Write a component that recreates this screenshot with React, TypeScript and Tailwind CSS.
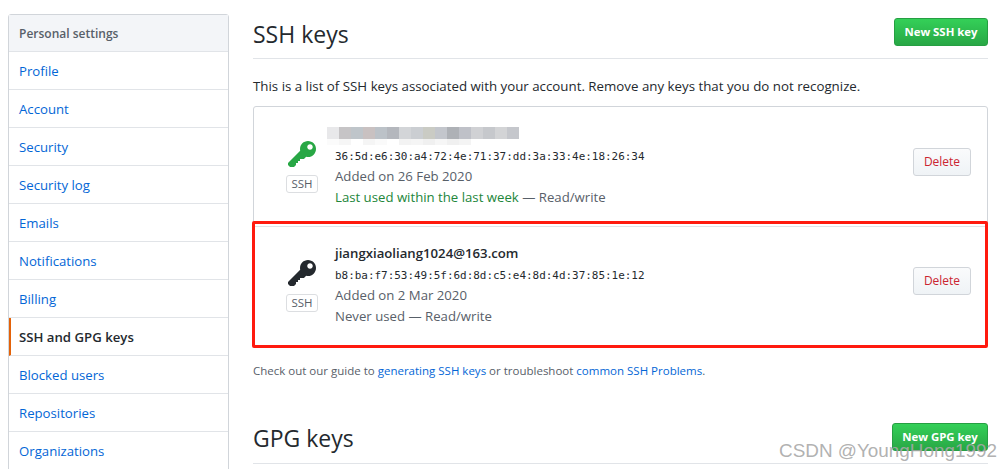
import React from "react";

const menuItems = [
  "Profile",
  "Account",
  "Security",
  "Security log",
  "Emails",
  "Notifications",
  "Billing",
  "SSH and GPG keys",
  "Blocked users",
  "Repositories",
  "Organizations",
];

const mosaicTop = ["#e8e8ea", "#c6c4c6", "#bfc5ca", "#c9c1c1", "#bcc2c8", "#b4b7bd", "#d3d5d8", "#cbced2", "#cacbc4", "#c3c6cc", "#aeb1b6", "#bfc1c8", "#d0d1d4", "#c6c8cc", "#d3d4d6", "#c5c7cc"];
const mosaicBottom = ["#fbfbfb", "#f6f6f6", "#ffffff", "#f5f5f5", "#fafafa", "#ffffff", "#f3f3f3", "#f5f5f5", "#f0f0f0", "#f6f6f6", "#f0f0f0", "#f4f4f4"];

const KeyIcon = ({ className }: { className: string }) => (
  <svg viewBox="0 0 14 16" width="28" height="32" className={className} fill="currentColor">
    <path
      fillRule="evenodd"
      d="M12.83 2.17C12.08 1.42 11.14 1.03 10 1c-1.13.03-2.08.42-2.83 1.17S6.04 3.86 6.01 5c0 .3.03.59.09.89L0 12v1l1 1h2l1-1v-1h1v-1h1v-1h2l1.09-1.11c.3.08.59.11.91.11 1.14-.03 2.08-.42 2.83-1.17S13.97 6.14 14 5c-.03-1.14-.42-2.08-1.17-2.83zM11 5.38c-.77 0-1.38-.61-1.38-1.38 0-.77.61-1.38 1.38-1.38.77 0 1.38.61 1.38 1.38 0 .77-.61 1.38-1.38 1.38z"
    />
  </svg>
);

const SshKey = ({
  title,
  fingerprint,
  added,
  used,
  iconColor,
  border,
}: {
  title: string;
  fingerprint: string;
  added: string;
  used: React.ReactNode;
  iconColor: string;
  border?: boolean;
}) => (
  <div className={`flex h-[119px] items-start pl-[24px] pr-4 ${border ? "border-t border-[#e1e4e8] pt-[17px]" : "pt-[18px]"}`}>
    <div className="mt-[14px] flex w-[48px] shrink-0 flex-col items-center">
      <KeyIcon className={iconColor} />
      <span className="mt-[4px] h-[18px] w-[32px] rounded-[3px] border border-[#dcdee1] text-center text-[11.5px] leading-[16px] text-[#586069]">SSH</span>
    </div>
    <div className="ml-[9px] flex-1">
      <div className="h-[19px] text-[13.2px] font-semibold leading-[19px] text-[#24292e]">{title}</div>
      <div className="mt-[5px] font-['DejaVu_Sans_Mono',monospace] text-[10.95px] leading-[16px] text-[#24292e]">{fingerprint}</div>
      <div className="mt-[1px] text-[13.2px] leading-[21px] text-[#586069]">{added}</div>
      <div className="text-[13.2px] leading-[21px] text-[#586069]">{used}</div>
    </div>
    <button className="mt-[23px] h-[28px] w-[58px] rounded-[3px] border border-[#d1d5da] bg-gradient-to-b from-[#fafbfc] to-[#eff3f6] text-[12px] font-medium text-[#cb2431]">
      Delete
    </button>
  </div>
);

const GreenButton = ({ label, width }: { label: string; width: string }) => (
  <button className={`h-[28px] rounded-[3px] border border-[#269f42] bg-gradient-to-b from-[#34d058] to-[#28a745] text-[11.4px] font-bold text-white ${width}`}>
    {label}
  </button>
);

export default function App() {
  return (
    <div className="relative flex h-[469px] w-[1001px] gap-[24px] overflow-hidden bg-white pl-[8px] pt-[14px] font-['Open_Sans',sans-serif]">
      <aside className="h-[480px] w-[221px] shrink-0 rounded-t-[3px] border border-[#d1d5da]">
        <div className="flex h-[37px] items-center border-b border-[#e1e4e8] bg-[#f3f5f8] px-[10px] pt-[2px] text-[12px] font-semibold text-[#586069]">
          Personal settings
        </div>
        {menuItems.map((item) => {
          const active = item === "SSH and GPG keys";
          return (
            <div
              key={item}
              className={`flex h-[38px] items-center border-b border-[#e1e4e8] pt-[2px] text-[13.2px] ${
                active ? "border-l-2 border-l-[#e36209] pl-[8px] font-semibold text-[#24292e]" : "pl-[10px] text-[#0366d6]"
              }`}
            >
              {item}
            </div>
          );
        })}
      </aside>

      <main className="w-[735px] shrink-0">
        <div className="flex h-[45px] items-start justify-between border-b border-[#e1e4e8] pt-[4px]">
          <h2 className="text-[23px] font-normal leading-[32px] text-[#24292e]">SSH keys</h2>
          <GreenButton label="New SSH key" width="w-[94px]" />
        </div>
        <p className="mt-[17px] text-[13.3px] leading-[20px] text-[#24292e]">
          This is a list of SSH keys associated with your account. Remove any keys that you do not recognize.
        </p>
        <div className="mt-[10px] h-[240px] rounded-[3px] border border-[#d1d5da]">
          <SshKey
            title=""
            fingerprint="36:5d:e6:30:a4:72:4e:71:37:dd:3a:33:4e:18:26:34"
            added="Added on 26 Feb 2020"
            used={
              <>
                <span className="text-[#22863a]">Last used within the last week</span> — Read/write
              </>
            }
            iconColor="text-[#28a745]"
          />
          <SshKey
            border
            title="jiangxiaoliang1024@163.com"
            fingerprint="b8:ba:f7:53:49:5f:6d:8d:c5:e4:8d:4d:37:85:1e:12"
            added="Added on 2 Mar 2020"
            used="Never used — Read/write"
            iconColor="text-[#24292e]"
          />
        </div>
        <p className="mt-[16px] text-[11.5px] leading-[18px] text-[#586069]">
          Check out our guide to <span className="text-[#0366d6]">generating SSH keys</span> or troubleshoot{" "}
          <span className="text-[#0366d6]">common SSH Problems</span>.
        </p>
        <div className="mt-[39px] flex h-[45px] items-start justify-between border-b border-[#e1e4e8] pt-[4px]">
          <h2 className="-mt-[1px] text-[23px] font-normal leading-[32px] text-[#24292e]">GPG keys</h2>
          <GreenButton label="New GPG key" width="w-[96px]" />
        </div>
      </main>

      {/* blurred out email */}
      <div className="absolute left-[327px] top-[127px] w-[192px]">
        <div className="flex h-[12px]">
          {mosaicTop.map((color, i) => (
            <div key={i} className="w-[12px]" style={{ backgroundColor: color }} />
          ))}
        </div>
        <div className="flex h-[6px]">
          {mosaicBottom.map((color, i) => (
            <div key={i} className="w-[12px]" style={{ backgroundColor: color }} />
          ))}
        </div>
      </div>

      {/* annotation */}
      <div className="absolute left-[252px] top-[221px] h-[127px] w-[736px] rounded-[2px] border-[3px] border-[#ff1a0f]" />
      <div className="absolute left-[779px] top-[439px] font-['Liberation_Sans',sans-serif] text-[18.9px] leading-[24px] text-[#a8a8a8]/90">
        CSDN @YoungHong1992
      </div>
    </div>
  );
}
